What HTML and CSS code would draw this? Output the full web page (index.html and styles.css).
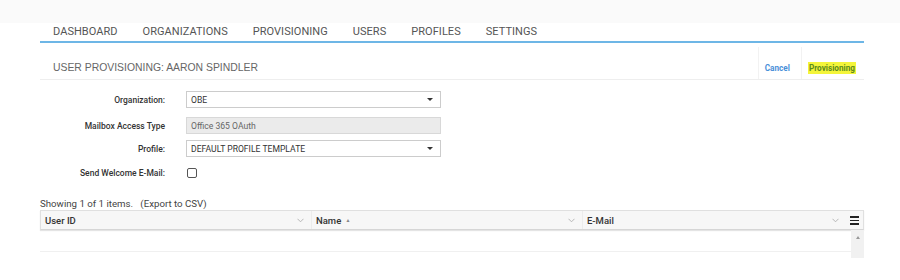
FILE: index.html
```html
<!DOCTYPE html>
<html>
<head>
<meta charset="utf-8">
<link rel="stylesheet" href="styles.css">
</head>
<body>
<div class="topband"></div>
<div class="wrap">
  <nav class="nav">
    <span class="nav-item">DASHBOARD</span>
    <span class="nav-item">ORGANIZATIONS</span>
    <span class="nav-item">PROVISIONING</span>
    <span class="nav-item">USERS</span>
    <span class="nav-item">PROFILES</span>
    <span class="nav-item">SETTINGS</span>
  </nav>
  <div class="header">
    <div class="title">USER PROVISIONING: AARON SPINDLER</div>
    <div class="actions">
      <span class="btn btn-cancel">Cancel</span>
      <span class="btn btn-prov"><span class="hl">Provisioning</span></span>
    </div>
  </div>
  <div class="form">
    <div class="row r1">
      <label class="lbl">Organization:</label>
      <div class="field select"><span>OBE</span><span class="caret"></span></div>
    </div>
    <div class="row r2">
      <label class="lbl">Mailbox Access Type</label>
      <div class="field disabled"><span>Office 365 OAuth</span></div>
    </div>
    <div class="row r3">
      <label class="lbl">Profile:</label>
      <div class="field select"><span>DEFAULT PROFILE TEMPLATE</span><span class="caret"></span></div>
    </div>
    <div class="row r4">
      <label class="lbl">Send Welcome E-Mail:</label>
      <span class="checkbox"></span>
    </div>
  </div>
  <div class="showing">Showing 1 of 1 items.&nbsp;&nbsp; (Export to CSV)</div>
  <div class="grid">
    <div class="grid-head">
      <div class="col c1"><span>User ID</span><svg class="chev" width="7" height="5" viewBox="0 0 7 5"><polyline points="0.5,0.8 3.5,3.8 6.5,0.8" fill="none" stroke="#b0b0b0" stroke-width="0.9"/></svg></div>
      <div class="col c2"><span>Name <span class="up">&#9650;</span></span><svg class="chev" width="7" height="5" viewBox="0 0 7 5"><polyline points="0.5,0.8 3.5,3.8 6.5,0.8" fill="none" stroke="#b0b0b0" stroke-width="0.9"/></svg></div>
      <div class="col c3"><span>E-Mail</span><svg class="chev" width="7" height="5" viewBox="0 0 7 5"><polyline points="0.5,0.8 3.5,3.8 6.5,0.8" fill="none" stroke="#b0b0b0" stroke-width="0.9"/></svg></div>
      <div class="menu"><span></span><span></span><span></span></div>
    </div>
    <div class="grid-body">
      <div class="grid-row"></div>
      <div class="scroll"><span class="sarrow"></span></div>
    </div>
  </div>
</div>
</body>
</html>
```

FILE: styles.css
```css
html, body {
  margin: 0;
  padding: 0;
  background: #fff;
  font-family: Roboto, "Liberation Sans", Arial, sans-serif;
  color: #333;
}
.topband {
  height: 23px;
  background: #fafafa;
}
.wrap {
  margin-left: 40px;
  width: 824px;
}
.nav {
  display: flex;
  gap: 25px;
  padding-left: 13px;
  height: 18px;
  border-bottom: 2px solid #6db6e6;
  align-items: center;
}
.nav-item {
  font-size: 11px;
  color: #555;
  line-height: 16px;
  letter-spacing: 0.05px;
}
.header {
  display: flex;
  justify-content: space-between;
  align-items: stretch;
  height: 36px;
  border-bottom: 1px solid #eeeeee;
}
.title {
  font-family: "Liberation Sans", Arial, sans-serif;
  font-size: 10.4px;
  color: #666;
  padding-left: 13px;
  padding-top: 19px;
  line-height: 12px;
}
.actions {
  display: flex;
  align-items: stretch;
  padding-right: 8px;
  padding-top: 4px;
}
.btn {
  font-size: 8.2px;
  font-weight: 700;
  display: flex;
  align-items: center;
  padding-top: 15px;
  padding-bottom: 5px;
}
.btn-cancel {
  color: #4a90d9;
  border-left: 1px solid #f2f2f2;
  padding-left: 6px;
  padding-right: 11px;
}
.btn-prov {
  border-left: 1px solid #f2f2f2;
  padding-left: 6px;
}
.hl {
  background: #f4f53a;
  color: #5b8a1a;
  padding: 1px 1px;
}
.form {
  padding-top: 11px;
}
.row {
  display: flex;
  align-items: center;
}
.lbl {
  width: 125px;
  text-align: right;
  font-size: 8.5px;
  font-weight: 500;
  color: #333;
  margin-right: 21px;
}
.field {
  width: 255px;
  height: 17px;
  box-sizing: border-box;
  border: 1px solid #cccccc;
  font-size: 8.6px;
  color: #333;
  display: flex;
  align-items: center;
  justify-content: space-between;
  padding: 0 7px 0 4px;
}
.disabled {
  background: #ebebeb;
  color: #666;
  border-color: #d8d8d8;
}
.caret {
  width: 0;
  height: 0;
  border-left: 3px solid transparent;
  border-right: 3px solid transparent;
  border-top: 3px solid #333;
}
.r2 { margin-top: 9px; }
.r3 { margin-top: 6px; }
.r4 { margin-top: 8px; height: 16px; }
.checkbox {
  width: 8px;
  height: 8px;
  border: 1px solid #555;
  border-radius: 2px;
  margin-left: 1px;
}
.showing {
  margin-top: 17px;
  font-size: 9.7px;
  color: #444;
  line-height: 12px;
}
.grid {
  margin-top: 0;
}
.grid-head {
  display: flex;
  height: 20px;
  background: #f7f7f7;
  border: 1px solid #e0e0e0;
  border-bottom: 1px solid #d6d6d6;
  box-shadow: 0 1px 1px #e4e4e4;
  box-sizing: border-box;
}
.col {
  display: flex;
  align-items: center;
  justify-content: space-between;
  font-size: 9.5px;
  font-weight: 500;
  color: #333;
  padding-left: 4px;
  padding-right: 7px;
  border-right: 1px solid #ececec;
  box-sizing: border-box;
}
.c1 { width: 271px; }
.c2 { width: 271px; }
.c3 { width: 263px; border-right: none; }
.chev {
  display: block;
}
.up {
  font-size: 5px;
  color: #888;
  vertical-align: 2px;
  margin-left: 2px;
}
.menu {
  width: 17px;
  display: flex;
  flex-direction: column;
  justify-content: center;
  align-items: center;
  gap: 2px;
  padding-top: 1px;
}
.menu span {
  width: 9px;
  height: 1.5px;
  background: #222;
}
.grid-body {
  display: flex;
}
.grid-row {
  flex: 1;
  height: 21px;
  border-bottom: 1px solid #f0f0f0;
}
.scroll {
  width: 13px;
  height: 28px;
  background: #f1f1f1;
  display: flex;
  justify-content: center;
  padding-top: 6px;
  box-sizing: border-box;
}
.sarrow {
  width: 0;
  height: 0;
  border-left: 2.5px solid transparent;
  border-right: 2.5px solid transparent;
  border-bottom: 3px solid #999;
}
```
